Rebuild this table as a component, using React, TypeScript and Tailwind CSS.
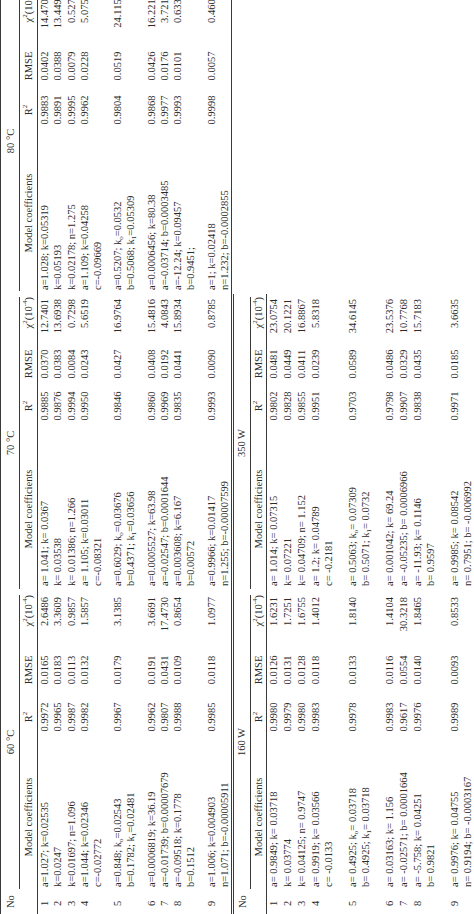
import React from 'react';

type Group = { mc: string[]; r2: string; rmse: string; chi: string };
type Row = { no: number; double?: boolean; g: Group[] };

// k_o / k_1 in the coefficient strings become k with a subscript
function Coef({ text }: { text: string }) {
  const parts = text.split(/k_(o|1)/);
  return (
    <>
      {parts.map((p, i) =>
        i % 2 === 1 ? (
          <span key={i}>
            k<sub className="text-[7px] leading-none">{p}</sub>
          </span>
        ) : (
          <span key={i}>{p}</span>
        )
      )}
    </>
  );
}

const part1: Row[] = [
  { no: 1, g: [
    { mc: ['a=1.027; k=0.02535'], r2: '0.9972', rmse: '0.0165', chi: '2.6486' },
    { mc: ['a= 1.041; k= 0.0367'], r2: '0.9885', rmse: '0.0370', chi: '12.7401' },
    { mc: ['a=1.028; k=0.05319'], r2: '0.9883', rmse: '0.0402', chi: '14.4702' },
  ] },
  { no: 2, g: [
    { mc: ['k=0.0247'], r2: '0.9965', rmse: '0.0183', chi: '3.3609' },
    { mc: ['k= 0.03538'], r2: '0.9876', rmse: '0.0383', chi: '13.6938' },
    { mc: ['k=0.05193'], r2: '0.9891', rmse: '0.0388', chi: '13.4498' },
  ] },
  { no: 3, g: [
    { mc: ['k=0.01697; n=1.096'], r2: '0.9987', rmse: '0.0113', chi: '0.9857' },
    { mc: ['k= 0.01386; n=1.266'], r2: '0.9994', rmse: '0.0084', chi: '0.7298' },
    { mc: ['k=0.02178; n=1.275'], r2: '0.9995', rmse: '0.0079', chi: '0.5276' },
  ] },
  { no: 4, double: true, g: [
    { mc: ['a=1.044; k=0.02346', 'c=-0.02772'], r2: '0.9982', rmse: '0.0132', chi: '1.5857' },
    { mc: ['a= 1.105; k=0.03011', 'c=-0.08321'], r2: '0.9950', rmse: '0.0243', chi: '5.6519' },
    { mc: ['a=1.109; k=0.04258', 'c=-0.09669'], r2: '0.9962', rmse: '0.0228', chi: '5.0759' },
  ] },
  { no: 5, double: true, g: [
    { mc: ['a=0.848; k_o=0.02543', 'b=0.1782; k_1=0.02481'], r2: '0.9967', rmse: '0.0179', chi: '3.1385' },
    { mc: ['a=0.6029; k_o=0.03676', 'b=0.4371; k_1=0.03656'], r2: '0.9846', rmse: '0.0427', chi: '16.9764' },
    { mc: ['a=0.5207; k_o=0.0532', 'b=0.5068; k_1=0.05309'], r2: '0.9804', rmse: '0.0519', chi: '24.1154' },
  ] },
  { no: 6, g: [
    { mc: ['a=0.0006819; k=36.19'], r2: '0.9962', rmse: '0.0191', chi: '3.6691' },
    { mc: ['a=0.0005527; k=63.98'], r2: '0.9860', rmse: '0.0408', chi: '15.4816' },
    { mc: ['a=0.0006456; k=80.38'], r2: '0.9868', rmse: '0.0426', chi: '16.2219' },
  ] },
  { no: 7, g: [
    { mc: ['a=-0.01739; b=0.00007679'], r2: '0.9807', rmse: '0.0431', chi: '17.4730' },
    { mc: ['a=-0.02547; b=0.0001644'], r2: '0.9969', rmse: '0.0192', chi: '4.0843' },
    { mc: ['a=-0.03714; b=0.0003485'], r2: '0.9977', rmse: '0.0176', chi: '3.7212' },
  ] },
  { no: 8, double: true, g: [
    { mc: ['a=-0.09518; k=0.1778', 'b=0.1512'], r2: '0.9988', rmse: '0.0109', chi: '0.8654' },
    { mc: ['a=0.003608; k=6.167', 'b=0.00572'], r2: '0.9835', rmse: '0.0441', chi: '15.8934' },
    { mc: ['a=-12.24; k=0.09457', 'b=0.9451;'], r2: '0.9993', rmse: '0.0101', chi: '0.6338' },
  ] },
  { no: 9, double: true, g: [
    { mc: ['a=1.006; k=0.004903', 'n=1.071; b=-0.00005911'], r2: '0.9985', rmse: '0.0118', chi: '1.0977' },
    { mc: ['a=0.9966; k=0.01417', 'n=1.255; b=-0.00007599'], r2: '0.9993', rmse: '0.0090', chi: '0.8785' },
    { mc: ['a=1; k=0.02418', 'n=1.232; b=-0.0002855'], r2: '0.9998', rmse: '0.0057', chi: '0.4607' },
  ] },
];

const part2: Row[] = [
  { no: 1, g: [
    { mc: ['a= 0.9849; k= 0.03718'], r2: '0.9980', rmse: '0.0126', chi: '1.6231' },
    { mc: ['a= 1.014; k= 0.07315'], r2: '0.9802', rmse: '0.0481', chi: '23.0754' },
  ] },
  { no: 2, g: [
    { mc: ['k= 0.03774'], r2: '0.9979', rmse: '0.0131', chi: '1.7251' },
    { mc: ['k= 0.07221'], r2: '0.9828', rmse: '0.0449', chi: '20.1221' },
  ] },
  { no: 3, g: [
    { mc: ['k= 0.04125; n= 0.9747'], r2: '0.9980', rmse: '0.0128', chi: '1.6755' },
    { mc: ['k= 0.04709; n= 1.152'], r2: '0.9855', rmse: '0.0411', chi: '16.8867' },
  ] },
  { no: 4, double: true, g: [
    { mc: ['a= 0.9919; k= 0.03566', 'c= -0.0133'], r2: '0.9983', rmse: '0.0118', chi: '1.4012' },
    { mc: ['a= 1.2; k= 0.04789', 'c= -0.2181'], r2: '0.9951', rmse: '0.0239', chi: '5.8318' },
  ] },
  { no: 5, double: true, g: [
    { mc: ['a= 0.4925; k_o= 0.03718', 'b= 0.4925; k_1= 0.03718'], r2: '0.9978', rmse: '0.0133', chi: '1.8140' },
    { mc: ['a= 0.5063; k_o= 0.07309', 'b= 0.5071; k_1= 0.0732'], r2: '0.9703', rmse: '0.0589', chi: '34.6145' },
  ] },
  { no: 6, g: [
    { mc: ['a= 0.03163; k= 1.156'], r2: '0.9983', rmse: '0.0116', chi: '1.4104' },
    { mc: ['a= 0.001042; k= 69.24'], r2: '0.9798', rmse: '0.0486', chi: '23.5376' },
  ] },
  { no: 7, g: [
    { mc: ['a= -0.02571; b= 0.0001664'], r2: '0.9617', rmse: '0.0554', chi: '30.3218' },
    { mc: ['a= -0.05235; b= 0.0006966'], r2: '0.9907', rmse: '0.0329', chi: '10.7768' },
  ] },
  { no: 8, double: true, g: [
    { mc: ['a= -5.758; k= 0.04251', 'b= 0.9821'], r2: '0.9976', rmse: '0.0140', chi: '1.8465' },
    { mc: ['a= -11.93; k= 0.1146', 'b= 0.9597'], r2: '0.9838', rmse: '0.0435', chi: '15.7183' },
  ] },
  { no: 9, double: true, g: [
    { mc: ['a= 0.9976; k= 0.04755', 'n= 0.9194; b= -0.0003167'], r2: '0.9989', rmse: '0.0093', chi: '0.8533' },
    { mc: ['a= 0.9985; k= 0.08542', 'n= 0.7951; b= -0.006992'], r2: '0.9971', rmse: '0.0185', chi: '3.6635' },
  ] },
];

// per-group text insets, taken from the scan
const mcPad = ['pl-[5px]', 'pl-[6px]', 'pl-[4px]'];
const chiPad = ['pr-[5px]', 'pr-[5px]', 'pr-[6px]'];

function Part({
  groups,
  rows,
  cols,
  line,
  single,
  dbl,
  headH,
  subH,
}: {
  groups: string[];
  rows: Row[];
  cols: string;
  line: string;
  single: string;
  dbl: string;
  headH: string;
  subH: string;
}) {
  return (
    <div className={`grid ${cols} border-t border-[#3a3a3a] self-start`}>
      {/* group header */}
      <div className={`${headH} pl-[6px] flex items-center`}>No</div>
      {groups.map((g) => (
        <div key={g} className={`col-span-4 ${headH} flex flex-col justify-end`}>
          <div className="text-center leading-none pb-[3px]">{g}</div>
          <div className="mx-[3px] border-t border-[#3a3a3a]" />
        </div>
      ))}

      {/* sub header */}
      <div className={subH} />
      {groups.map((g) => (
        <React.Fragment key={g}>
          <div className={`${subH} flex items-center justify-center`}>Model coefficients</div>
          <div className={`${subH} flex items-center justify-center`}>
            R<sup className="text-[7px]">2</sup>
          </div>
          <div className={`${subH} flex items-center justify-center`}>RMSE</div>
          <div className={`${subH} flex items-center justify-end pr-[3px]`}>
            χ<sup className="text-[7px]">2</sup>(10<sup className="text-[7px]">-4</sup>)
          </div>
        </React.Fragment>
      ))}
      <div className="col-span-full border-t border-[#3a3a3a]" />

      {/* data */}
      {rows.map((r) => {
        const h = r.double ? dbl : single;
        return (
          <React.Fragment key={r.no}>
            <div className={`${h} ${line} pl-[8px]`}>{r.no}</div>
            {r.g.map((g, i) => (
              <React.Fragment key={i}>
                <div className={`${h} ${line} ${mcPad[i]} whitespace-nowrap`}>
                  {g.mc.map((l) => (
                    <div key={l} className={line}>
                      <Coef text={l} />
                    </div>
                  ))}
                </div>
                <div className={`${h} ${line} text-center`}>{g.r2}</div>
                <div className={`${h} ${line} text-center`}>{g.rmse}</div>
                <div className={`${h} ${line} text-right ${chiPad[i]}`}>{g.chi}</div>
              </React.Fragment>
            ))}
          </React.Fragment>
        );
      })}
    </div>
  );
}

export default function App() {
  return (
    <div className="w-[474px] h-[914px] overflow-hidden bg-white">
      <div
        className="w-[914px] h-[474px] origin-top-left -rotate-90 translate-y-[914px] flex flex-col text-[10.5px] text-[#2b2b2b]"
        style={{ fontFamily: '"Liberation Serif", "Times New Roman", serif' }}
      >
        <div className="h-[232px] flex flex-col border-b border-[#3a3a3a]">
          <Part
            groups={['60 °C', '70 °C', '80 °C']}
            rows={part1}
            cols="grid-cols-[22px_150px_50px_44px_56px_166px_40px_44px_48px_162px_44px_44px_56px]"
            line="leading-[13px]"
            single="h-[13.3px]"
            dbl="h-[33.5px]"
            headH="h-[19px]"
            subH="h-[17px]"
          />
        </div>
        <div className="pt-[1px] flex flex-col">
          <Part
            groups={['160 W', '350 W']}
            rows={part2}
            cols="grid-cols-[22px_150px_50px_44px_56px_166px_40px_44px_48px]"
            line="leading-[13px]"
            single="h-[14px]"
            dbl="h-[37px]"
            headH="h-[17px]"
            subH="h-[15px]"
          />
        </div>
      </div>
    </div>
  );
}
